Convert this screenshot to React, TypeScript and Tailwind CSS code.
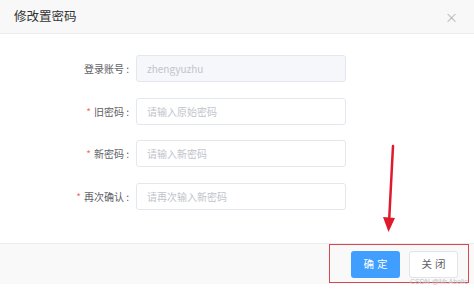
import React from 'react';

const rows = [
  { label: '登录账号', required: false, value: 'zhengyuzhu', disabled: true },
  { label: '旧密码', required: true, value: '请输入原始密码', disabled: false },
  { label: '新密码', required: true, value: '请输入新密码', disabled: false },
  { label: '再次确认', required: true, value: '请再次输入新密码', disabled: false },
];

export default function App() {
  return (
    <div className="relative w-[474px] h-[289px] bg-white overflow-hidden font-['Noto_Sans_CJK_SC','Noto_Sans',sans-serif]">
      {/* Header */}
      <div className="h-[34px] flex items-center justify-between pl-[14px] pr-[16px] bg-[#f8f8f8] border-b border-[#ebebeb]">
        <span className="text-[12.5px] text-[#333] leading-none">修改置密码</span>
        <span className="text-[13px] text-[#b5b5b5] leading-none">×</span>
      </div>

      {/* Form */}
      <div className="h-[209px] pt-[21px] flex flex-col gap-[15.5px]">
        {rows.map((r) => (
          <div key={r.label} className="flex items-center h-[27px]">
            <div className="w-[130px] pr-[1px] text-right text-[10px] text-[#606266]">
              {r.required && <span className="text-[#f56c6c] mr-[3px]">*</span>}
              {r.label}&nbsp;:
            </div>
            <div
              className={
                r.disabled
                  ? 'ml-[6px] w-[210px] h-[27px] rounded-[3px] border border-[#e4e7ed] bg-[#f5f7fa] flex items-center px-[10px] text-[10px] text-[#c0c4cc]'
                  : 'ml-[6px] w-[210px] h-[27px] rounded-[3px] border border-[#e4e7ed] bg-white flex items-center px-[10px] text-[10px] text-[#c0c4cc]'
              }
            >
              {r.value}
            </div>
          </div>
        ))}
      </div>

      {/* Footer */}
      <div className="h-[41px] bg-[#f9f9f9] border-t border-[#ececec] flex items-center justify-end gap-[9px] pr-[16px]">
        <button className="w-[49px] h-[27px] rounded-[3px] bg-[#409eff] text-white text-[10.5px] tracking-[3px] pl-[3px]">确定</button>
        <button className="w-[49px] h-[27px] rounded-[3px] bg-white border border-[#e4e4e4] text-[#606266] text-[10.5px] tracking-[3px] pl-[3px]">关闭</button>
      </div>

      {/* Annotation box */}
      <div className="absolute left-[329px] top-[244px] w-[140px] h-[39px] border-[1.5px] border-[#d9474f]" />

      {/* Annotation arrow */}
      <svg className="absolute left-[380px] top-[143px]" width="24" height="92" viewBox="0 0 24 92">
        <path d="M13 3 L9 80" stroke="#e01a2b" strokeWidth="2.5" strokeLinecap="round" fill="none" />
        <path d="M3 74 L8.5 89 L15 75 Z" fill="#e01a2b" />
      </svg>

      {/* Watermark */}
      <span className="absolute left-[410px] top-[278px] text-[7px] text-[#c4c4c4] leading-none font-['Liberation_Sans',sans-serif]">CSDN @Mr.Abolic</span>
    </div>
  );
}
